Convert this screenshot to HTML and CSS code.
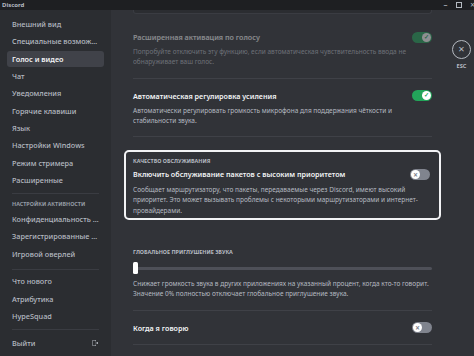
FILE: index.html
```html
<!DOCTYPE html>
<html lang="ru">
<head>
    <meta charset="UTF-8">
    <title>Discord</title>
    <link rel="stylesheet" href="styles.css">
</head>
<body>
    <div class="titlebar">
        <span class="app-name">Discord</span>
        <div class="win-controls">
            <span class="win-btn">&#8211;</span>
            <span class="win-btn square"></span>
            <span class="win-btn">&#215;</span>
        </div>
    </div>

    <div class="app">
        <nav class="sidebar">
            <a class="side-item">Внешний вид</a>
            <a class="side-item">Специальные возможности</a>
            <a class="side-item active">Голос и видео</a>
            <a class="side-item">Чат</a>
            <a class="side-item">Уведомления</a>
            <a class="side-item">Горячие клавиши</a>
            <a class="side-item">Язык</a>
            <a class="side-item">Настройки Windows</a>
            <a class="side-item">Режим стримера</a>
            <a class="side-item">Расширенные</a>
            <div class="side-sep"></div>
            <div class="side-header">Настройки активности</div>
            <a class="side-item">Конфиденциальность активности</a>
            <a class="side-item">Зарегистрированные игры</a>
            <a class="side-item">Игровой оверлей</a>
            <div class="side-sep sep-two"></div>
            <a class="side-item">Что нового</a>
            <a class="side-item">Атрибутика</a>
            <a class="side-item">HypeSquad</a>
            <div class="side-sep sep-three"></div>
            <a class="side-item logout">
                <span>Выйти</span>
                <svg width="8" height="8" viewBox="0 0 16 16" fill="none">
                    <path d="M3 2h7v3H9V3H4v10h5v-2h1v3H3z" fill="#b5bac1"/>
                    <path d="M9 8h5M12 6l2 2-2 2" stroke="#b5bac1" stroke-width="1.6"/>
                </svg>
            </a>
        </nav>

        <main class="content">
            <div class="column">
                <div class="prev-card"></div>

                <div class="setting disabled">
                    <div class="setting-row">
                        <span class="setting-title">Расширенная активация по голосу</span>
                        <span class="toggle on"></span>
                    </div>
                    <p class="setting-desc">Попробуйте отключить эту функцию, если автоматическая чувствительность ввода не обнаруживает ваш голос.</p>
                </div>
                <div class="divider"></div>

                <div class="setting">
                    <div class="setting-row">
                        <span class="setting-title">Автоматическая регулировка усиления</span>
                        <span class="toggle on"></span>
                    </div>
                    <p class="setting-desc">Автоматически регулировать громкость микрофона для поддержания чёткости и стабильности звука.</p>
                </div>
                <div class="divider"></div>

                <div class="setting highlight">
                    <div class="small-header">Качество обслуживания</div>
                    <div class="setting-row">
                        <span class="setting-title">Включить обслуживание пакетов с высоким приоритетом</span>
                        <span class="toggle"></span>
                    </div>
                    <p class="setting-desc">Сообщает маршрутизатору, что пакеты, передаваемые через Discord, имеют высокий<br>приоритет. Это может вызывать проблемы с некоторыми маршрутизаторами и интернет-<br>провайдерами.</p>
                </div>

                <div class="setting attenuation">
                    <div class="small-header">Глобальное приглушение звука</div>
                    <div class="slider">
                        <div class="slider-track"></div>
                        <div class="slider-handle"></div>
                    </div>
                    <p class="setting-desc">Снижает громкость звука в других приложениях на указанный процент, когда кто-то говорит. Значение 0% полностью отключает глобальное приглушение звука.</p>
                </div>
                <div class="divider"></div>

                <div class="setting">
                    <div class="setting-row">
                        <span class="setting-title">Когда я говорю</span>
                        <span class="toggle"></span>
                    </div>
                </div>
                <div class="divider"></div>

                <div class="setting">
                    <div class="setting-row">
                        <span class="setting-title">Когда другие говорят</span>
                        <span class="toggle on"></span>
                    </div>
                </div>
            </div>

            <div class="esc">
                <div class="esc-circle">&#215;</div>
                <span class="esc-label">ESC</span>
            </div>
        </main>
    </div>
</body>
</html>
```

FILE: styles.css
```css
:root {
    --titlebar-bg: #1e1f22;
    --sidebar-bg: #2b2d31;
    --main-bg: #313338;
    --text-normal: #f2f3f5;
    --text-muted: #b5bac1;
    --text-faint: #949ba4;
    --divider: #3f4147;
    --green: #23a55a;
    --toggle-off: #80848e;
}

* {
    box-sizing: border-box;
}

html, body {
    margin: 0;
    height: 100%;
    overflow: hidden;
}

body {
    font-family: "Noto Sans", "Open Sans", sans-serif;
    background-color: var(--main-bg);
    color: var(--text-normal);
    display: flex;
    flex-direction: column;
}

/* Title bar */
.titlebar {
    height: 10px;
    flex-shrink: 0;
    background-color: var(--titlebar-bg);
    display: flex;
    align-items: center;
    justify-content: space-between;
    padding-left: 2px;
}

.app-name {
    font-size: 6px;
    font-weight: 700;
    color: #b5bac1;
    line-height: 1;
}

.win-controls {
    display: flex;
    align-items: center;
    gap: 7px;
    margin-right: -2px;
}

.win-btn {
    width: 7px;
    font-size: 8px;
    line-height: 1;
    color: #b5bac1;
    text-align: center;
}

.win-btn.square {
    width: 6px;
    height: 6px;
    border: 1px solid #b5bac1;
}

/* Layout */
.app {
    flex: 1;
    display: flex;
    min-height: 0;
}

.sidebar {
    width: 111px;
    flex-shrink: 0;
    background-color: var(--sidebar-bg);
    padding: 6px 7px 0;
    display: flex;
    flex-direction: column;
    gap: 1.33px;
}

.side-item {
    height: 16px;
    flex-shrink: 0;
    padding: 0 5px;
    border-radius: 3px;
    font-size: 7.3px;
    font-weight: 500;
    line-height: 16px;
    color: var(--text-muted);
    white-space: nowrap;
    overflow: hidden;
    text-overflow: ellipsis;
}

.side-item.active {
    background-color: #404249;
    color: var(--text-normal);
    font-weight: 600;
}

.side-item.logout {
    display: flex;
    align-items: center;
    justify-content: space-between;
}

.side-sep {
    height: 1px;
    margin: 4px 5px 4px;
    background-color: #3a3c42;
    flex-shrink: 0;
}

.sep-two {
    margin: 6px 5px 2px;
}

.sep-three {
    margin: 4px 5px 3px;
}

.side-header {
    padding: 0 5px;
    font-size: 5.4px;
    font-weight: 700;
    text-transform: uppercase;
    line-height: 8px;
    color: var(--text-faint);
    margin-bottom: 2px;
}

/* Main content */
.content {
    flex: 1;
    display: flex;
    padding-left: 22px;
    min-width: 0;
}

.column {
    width: 299px;
    flex-shrink: 0;
    display: flex;
    flex-direction: column;
}

.prev-card {
    height: 4px;
    flex-shrink: 0;
    background-color: #2b2d31;
    border: 1px solid #3a3c42;
    border-top: none;
    border-radius: 0 0 3px 3px;
    margin-bottom: 17px;
}

.setting {
    flex-shrink: 0;
}

.setting.disabled {
    opacity: 0.45;
}

.setting-row {
    height: 12px;
    display: flex;
    align-items: center;
    justify-content: space-between;
}

.setting-title {
    font-size: 7.2px;
    font-weight: 600;
    color: var(--text-normal);
    white-space: nowrap;
}

.setting-desc {
    margin: 4px 0 0;
    font-size: 6.5px;
    line-height: 10.3px;
    color: var(--text-muted);
}

.divider {
    height: 1px;
    flex-shrink: 0;
    background-color: var(--divider);
    margin: 10px 0 11px;
}

.small-header {
    font-size: 5.4px;
    font-weight: 700;
    text-transform: uppercase;
    line-height: 8px;
    color: var(--text-muted);
}

.highlight {
    margin: 2px -9px 0;
    padding: 5px 7px 2px;
    border: 2px solid #f2f3f5;
    border-radius: 5px;
}

.highlight .small-header {
    margin-bottom: 3px;
}

.highlight .setting-row {
    padding-right: 2px;
}

.highlight .setting-desc {
    margin-top: 5px;
    white-space: nowrap;
}

.attenuation {
    margin-top: 28px;
}

/* Slider */
.slider {
    position: relative;
    height: 12px;
    margin-top: 6px;
    display: flex;
    align-items: center;
}

.slider-track {
    flex: 1;
    height: 3px;
    border-radius: 2px;
    background-color: #4e5058;
}

.slider-handle {
    position: absolute;
    left: 0;
    top: 0;
    width: 5px;
    height: 12px;
    border-radius: 1.5px;
    background-color: #ffffff;
}

.attenuation .setting-desc {
    margin-top: 5px;
}

/* Toggles */
.toggle {
    position: relative;
    width: 20px;
    height: 11px;
    flex-shrink: 0;
    border-radius: 6px;
    background-color: var(--toggle-off);
}

.toggle::before {
    content: "\00d7";
    position: absolute;
    top: 1px;
    left: 1px;
    width: 9px;
    height: 9px;
    border-radius: 50%;
    background-color: #ffffff;
    color: var(--toggle-off);
    font-size: 8px;
    font-weight: 700;
    line-height: 9px;
    text-align: center;
}

.toggle.on {
    background-color: var(--green);
}

.toggle.on::before {
    content: "\2713";
    left: 10px;
    color: var(--green);
    font-size: 6px;
}

/* ESC */
.esc {
    margin-left: 20px;
    padding-top: 30px;
    display: flex;
    flex-direction: column;
    align-items: center;
    gap: 3px;
}

.esc-circle {
    width: 19px;
    height: 19px;
    border: 1.5px solid #b5bac1;
    border-radius: 50%;
    color: #b5bac1;
    font-size: 11px;
    line-height: 15px;
    text-align: center;
}

.esc-label {
    font-size: 5.6px;
    font-weight: 700;
    color: #b5bac1;
    line-height: 8px;
}
```
